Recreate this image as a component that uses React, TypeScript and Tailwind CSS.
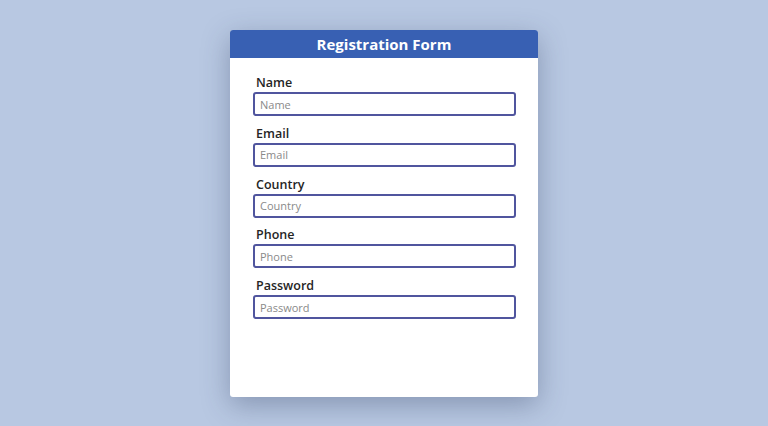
import React from "react";

const fields = ["Name", "Email", "Country", "Phone", "Password"];

export default function App() {
  return (
    <div
      className="w-full h-[426px] bg-[#b8c8e2] flex justify-center pt-[30px]"
      style={{ fontFamily: '"Open Sans", "Noto Sans", sans-serif' }}
    >
      <div className="w-[308px] h-[367px] bg-white rounded-[3px] shadow-[0_8px_28px_rgba(40,55,90,0.35)] overflow-hidden flex flex-col">
        <div className="h-[28px] bg-[#3860b3] flex items-center justify-center text-white font-bold text-[15px] leading-none">
          Registration Form
        </div>
        <div className="pl-[23px] pr-[22px] pt-[16px] flex flex-col gap-[8.75px]">
          {fields.map((f) => (
            <div key={f} className="flex flex-col">
              <label className="pl-[3px] text-[12.5px] leading-[18px] font-semibold text-[#252525]">
                {f}
              </label>
              <input
                type={f === "Password" ? "password" : "text"}
                placeholder={f}
                className="h-[24px] w-full border-2 border-[#50559e] rounded-[3px] px-[5px] text-[11px] text-[#333] placeholder:text-[#8a8a8a] outline-none"
                style={{ fontFamily: '"Open Sans", "Noto Sans", sans-serif' }}
              />
            </div>
          ))}
        </div>
      </div>
    </div>
  );
}
